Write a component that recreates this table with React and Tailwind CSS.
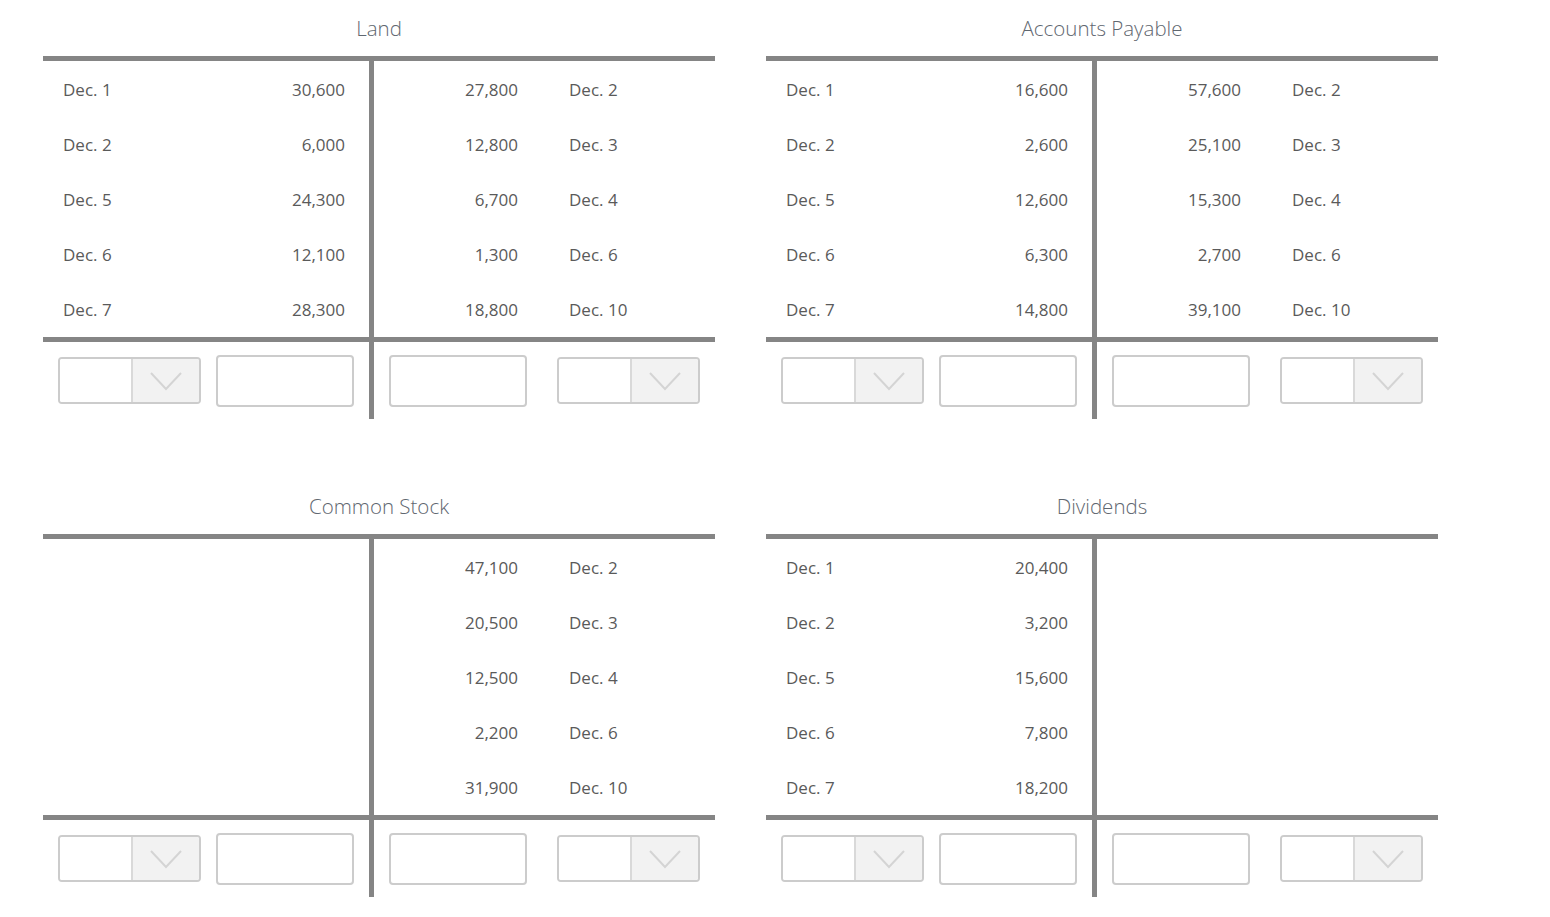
import React from 'react';

const accounts = [
  {
    title: 'Land',
    debits: [['Dec. 1', '30,600'], ['Dec. 2', '6,000'], ['Dec. 5', '24,300'], ['Dec. 6', '12,100'], ['Dec. 7', '28,300']],
    credits: [['27,800', 'Dec. 2'], ['12,800', 'Dec. 3'], ['6,700', 'Dec. 4'], ['1,300', 'Dec. 6'], ['18,800', 'Dec. 10']],
  },
  {
    title: 'Accounts Payable',
    debits: [['Dec. 1', '16,600'], ['Dec. 2', '2,600'], ['Dec. 5', '12,600'], ['Dec. 6', '6,300'], ['Dec. 7', '14,800']],
    credits: [['57,600', 'Dec. 2'], ['25,100', 'Dec. 3'], ['15,300', 'Dec. 4'], ['2,700', 'Dec. 6'], ['39,100', 'Dec. 10']],
  },
  {
    title: 'Common Stock',
    debits: [],
    credits: [['47,100', 'Dec. 2'], ['20,500', 'Dec. 3'], ['12,500', 'Dec. 4'], ['2,200', 'Dec. 6'], ['31,900', 'Dec. 10']],
  },
  {
    title: 'Dividends',
    debits: [['Dec. 1', '20,400'], ['Dec. 2', '3,200'], ['Dec. 5', '15,600'], ['Dec. 6', '7,800'], ['Dec. 7', '18,200']],
    credits: [],
  },
];

function SelectBox() {
  return (
    <div className="flex w-[143px] h-[47px] rounded-[4px] border-2 border-[#cccccc] overflow-hidden">
      <div className="w-[71px] bg-white" />
      <div className="flex-1 flex items-center justify-center bg-[#f2f2f2] border-l-2 border-[#d9d9d9]">
        <svg width="32" height="20" viewBox="0 0 32 20" fill="none">
          <path d="M1 2 L16 18 L31 2" stroke="#d4d4d4" strokeWidth="2" />
        </svg>
      </div>
    </div>
  );
}

function TextBox() {
  return <div className="w-[138px] h-[52px] rounded-[4px] border-2 border-[#cccccc] bg-white" />;
}

function TAccount({ title, debits, credits }) {
  return (
    <div className="w-[672px] flex flex-col">
      <div className="h-[56px] flex items-center justify-center text-[20.5px] font-light text-[#5f6770]">
        {title}
      </div>
      <div className="h-[5px] bg-[#858585]" />
      <div className="flex">
        <div className="w-[326px] flex flex-col">
          <div className="h-[276px] pt-[1px]">
            {debits.map(([d, a]) => (
              <div key={d} className="h-[55px] flex items-center justify-between pl-[20px] pr-[24px]">
                <span>{d}</span>
                <span>{a}</span>
              </div>
            ))}
          </div>
          <div className="h-[5px] bg-[#858585]" />
          <div className="h-[77px] flex items-center gap-[15px] px-[15px]">
            <SelectBox />
            <TextBox />
          </div>
        </div>
        <div className="w-[5px] bg-[#858585]" />
        <div className="w-[341px] flex flex-col">
          <div className="h-[276px] pt-[1px]">
            {credits.map(([a, d]) => (
              <div key={d} className="h-[55px] flex items-center">
                <span className="w-[144px] text-right">{a}</span>
                <span className="ml-[51px]">{d}</span>
              </div>
            ))}
          </div>
          <div className="h-[5px] bg-[#858585]" />
          <div className="h-[77px] flex items-center justify-between px-[15px]">
            <TextBox />
            <SelectBox />
          </div>
        </div>
      </div>
    </div>
  );
}

export default function App() {
  return (
    <div
      className="min-h-[917px] bg-white pl-[43px] text-[17px] text-[#5a5a5a]"
      style={{ fontFamily: '"Open Sans", "Noto Sans", sans-serif' }}
    >
      <div className="grid grid-cols-[672px_672px] gap-x-[51px] gap-y-[59px]">
        {accounts.map(acc => (
          <TAccount key={acc.title} {...acc} />
        ))}
      </div>
    </div>
  );
}
